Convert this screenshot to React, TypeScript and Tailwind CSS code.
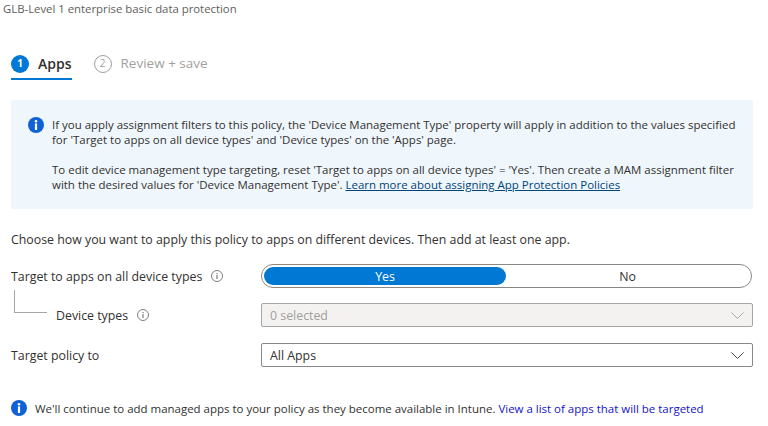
import React from 'react';

function SolidInfo({ className }: { className: string }) {
  return (
    <svg viewBox="0 0 16 16" className={className}>
      <circle cx="8" cy="8" r="8" fill="#0f62d6" />
      <circle cx="8" cy="4.2" r="1.3" fill="#fff" />
      <rect x="6.9" y="6.4" width="2.2" height="6.6" fill="#fff" />
    </svg>
  );
}

function OutlineInfo() {
  return (
    <svg viewBox="0 0 12 12" className="w-3 h-3 shrink-0">
      <circle cx="6" cy="6" r="5.5" fill="none" stroke="#605e5c" strokeWidth="0.8" />
      <circle cx="6" cy="3.6" r="0.7" fill="#605e5c" />
      <rect x="5.5" y="5" width="1" height="4" fill="#605e5c" />
    </svg>
  );
}

function Select({ value, disabled }: { value: string; disabled?: boolean }) {
  return (
    <div
      className={`flex items-center justify-between w-[492px] h-6 pl-2 pr-2 rounded-[2px] border ${
        disabled ? 'bg-[#f3f2f1] border-[#a6a6a6] text-[#a19f9d]' : 'bg-white border-[#8a8886] text-[#323130]'
      }`}
    >
      <span>{value}</span>
      <svg viewBox="0 0 13 7" className="w-[13px] h-[7px]">
        <path d="M0.4 0.4 L6.5 6.5 L12.6 0.4" fill="none" stroke={disabled ? '#a19f9d' : '#323130'} strokeWidth="0.9" />
      </svg>
    </div>
  );
}

export default function App() {
  return (
    <div className="w-[768px] h-[426px] overflow-hidden bg-white text-[12.35px] leading-[15px] text-[#323130] font-['Open_Sans','Noto_Sans',sans-serif]">
      <div className="pl-[3px] pt-[1px] text-[11.35px] text-[#605e5c]">GLB-Level 1 enterprise basic data protection</div>

      <div className="flex items-start mt-[35px] ml-[11px] h-[35px]">
        <div className="flex flex-col">
          <div className="flex items-center gap-[9px] h-[25px]">
            <div className="w-[18px] h-[18px] rounded-full bg-[#0078d4] text-white text-[10px] font-bold flex items-center justify-center">1</div>
            <span className="text-[14px] font-semibold text-[#323130]">Apps</span>
          </div>
          <div className="h-[2px] mt-[2px] bg-[#0078d4]" />
        </div>
        <div className="flex items-center gap-[9px] h-[25px] ml-[22px] text-[#a19f9d]">
          <div className="w-[18px] h-[18px] rounded-full border border-[#a19f9d] text-[10px] flex items-center justify-center">2</div>
          <span className="text-[13.5px]">Review + save</span>
        </div>
      </div>

      <div className="flex gap-2 mt-[14px] ml-[11px] w-[742px] h-[109px] bg-[#eff6fc] pl-[17px] pr-3 pt-[17px] text-[11.47px]">
        <SolidInfo className="w-4 h-4 shrink-0" />
        <div>
          <p className="whitespace-nowrap">If you apply assignment filters to this policy, the 'Device Management Type' property will apply in addition to the values specified<br />for 'Target to apps on all device types' and 'Device types' on the 'Apps' page.</p>
          <p className="mt-[15px] whitespace-nowrap">To edit device management type targeting, reset 'Target to apps on all device types' = 'Yes'. Then create a MAM assignment filter<br />with the desired values for 'Device Management Type'. <a className="underline text-[#004578]">Learn more about assigning App Protection Policies</a></p>
        </div>
      </div>

      <p className="ml-[11px] mt-[23px]">Choose how you want to apply this policy to apps on different devices. Then add at least one app.</p>

      <div className="flex items-center mt-[17px] ml-[11px] h-6">
        <div className="flex items-center gap-[9px] w-[250px]">
          <span>Target to apps on all device types</span>
          <OutlineInfo />
        </div>
        <div className="flex w-[491px] h-6 p-[2px] rounded-full border border-[#8a8886] bg-white">
          <div className="w-[242px] rounded-full bg-[#0078d4] text-white flex items-center justify-center">Yes</div>
          <div className="flex-1 flex items-center justify-center text-[#323130]">No</div>
        </div>
      </div>

      <div className="flex items-center mt-[15px] ml-[11px] h-6 relative">
        <div className="absolute left-[3px] -top-[13px] w-[33px] h-[23px] border-l border-b border-[#a6a6a6]" />
        <div className="flex items-center gap-[9px] w-[250px] pl-[45px]">
          <span>Device types</span>
          <OutlineInfo />
        </div>
        <Select value="0 selected" disabled />
      </div>

      <div className="flex items-center mt-4 ml-[11px] h-6">
        <div className="w-[250px]">Target policy to</div>
        <Select value="All Apps" />
      </div>

      <div className="flex items-center gap-2 mt-[33px] ml-[11px] text-[11.47px]">
        <SolidInfo className="w-4 h-4 shrink-0" />
        <p className="whitespace-nowrap">We'll continue to add managed apps to your policy as they become available in Intune. <a className="text-[#1414c8]">View a list of apps that will be targeted</a></p>
      </div>
    </div>
  );
}
